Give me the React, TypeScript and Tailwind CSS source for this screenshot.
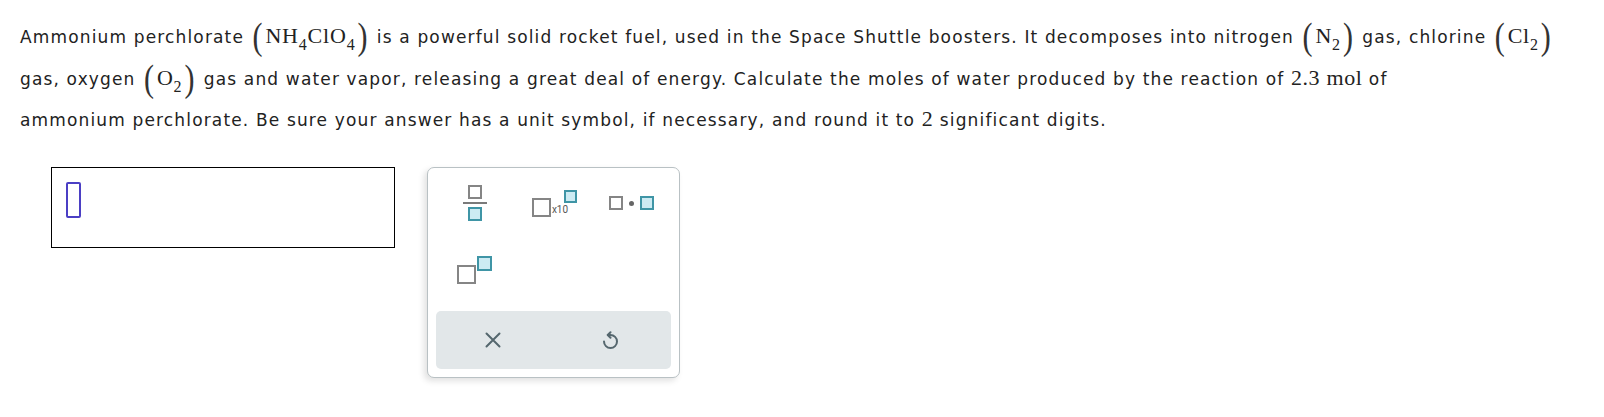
import React from 'react';

const serif = { fontFamily: '"Liberation Serif", "Times New Roman", serif' };

// stretched parenthesis like the math renderer draws
const Paren = ({ ch }: { ch: string }) => (
  <span
    className="inline-block text-[30px] leading-none text-[#333] scale-y-[1.25] font-light"
    style={serif}
  >
    {ch}
  </span>
);

const Sub = ({ children }: { children: React.ReactNode }) => (
  <span className="relative top-[7px] text-[16px] leading-none">{children}</span>
);

const Formula = ({ children }: { children: React.ReactNode }) => (
  <span className="inline-flex items-center align-middle h-[30px] mx-[2px] -mt-[4px] tracking-[0.8px]" style={serif}>
    <Paren ch="(" />
    <span className="text-[22px] leading-none px-[2px] text-[#222]">{children}</span>
    <Paren ch=")" />
  </span>
);

const MathText = ({ children }: { children: React.ReactNode }) => (
  <span className="text-[22px] leading-none text-[#222] tracking-[0.5px]" style={serif}>
    {children}
  </span>
);

const GreySq = ({ className = '' }: { className?: string }) => (
  <span className={`block border-2 border-[#858585] bg-white ${className}`} />
);

const TealSq = ({ className = '' }: { className?: string }) => (
  <span className={`block border-2 border-[#3f95a6] bg-[#cdebf3] ${className}`} />
);

const FractionIcon = () => (
  <span className="flex flex-col items-center">
    <GreySq className="w-[14px] h-[14px]" />
    <span className="block w-[24px] h-[2px] bg-[#7a7a7a] my-[3px]" />
    <TealSq className="w-[14px] h-[14px]" />
  </span>
);

const SciIcon = () => (
  <span className="flex items-end translate-x-[1px]">
    <GreySq className="w-[19px] h-[19px]" />
    <span
      className="text-[10px] leading-none text-[#555] ml-[1px] mb-[2px]"
      style={{ fontFamily: 'Roboto, "Liberation Sans", sans-serif' }}
    >
      x10
    </span>
    <TealSq className="w-[13px] h-[13px] -ml-[4px] mb-[14px]" />
  </span>
);

const DotIcon = () => (
  <span className="flex items-center">
    <GreySq className="w-[14px] h-[14px]" />
    <span className="block w-[5px] h-[5px] rounded-full bg-[#666] mx-[6px]" />
    <TealSq className="w-[14px] h-[14px]" />
  </span>
);

const PowerIcon = () => (
  <span className="flex items-start -translate-x-[1px]">
    <GreySq className="w-[19px] h-[19px] mt-[9px]" />
    <TealSq className="w-[15px] h-[15px] ml-[1px]" />
  </span>
);

const App = () => {
  return (
    <div
      className="w-[1604px] h-[417px] bg-white pl-[20px] pt-[17px] text-[#222]"
      style={{ fontFamily: '"DejaVu Sans", Verdana, sans-serif' }}
    >
      {/* Question */}
      <p className="text-[17px] leading-[41.5px] whitespace-nowrap tracking-[1.15px]">
        Ammonium perchlorate{' '}
        <Formula>
          NH<Sub>4</Sub>ClO<Sub>4</Sub>
        </Formula>{' '}
        is a powerful solid rocket fuel, used in the Space Shuttle boosters. It decomposes into nitrogen{' '}
        <Formula>
          N<Sub>2</Sub>
        </Formula>{' '}
        gas, chlorine{' '}
        <Formula>
          Cl<Sub>2</Sub>
        </Formula>
        <br />
        gas, oxygen{' '}
        <Formula>
          O<Sub>2</Sub>
        </Formula>{' '}
        gas and water vapor, releasing a great deal of energy. Calculate the moles of water produced by the reaction of{' '}
        <MathText>2.3</MathText> <MathText>mol</MathText> of
        <br />
        ammonium perchlorate. Be sure your answer has a unit symbol, if necessary, and round it to <MathText>2</MathText>{' '}
        significant digits.
      </p>
      {/* End Question */}

      {/* Answer row */}
      <div className="flex items-start mt-[25px] ml-[31px] gap-[32px]">
        <div className="w-[344px] h-[81px] border border-black bg-white pt-[14px] pl-[14px]">
          <div className="w-[15px] h-[36px] border-2 border-[#4b3fc4] rounded-[2px]" />
        </div>

        {/* Palette */}
        <div className="w-[253px] h-[211px] border border-[#b9c1c4] rounded-[7px] bg-white shadow-[-3px_3px_6px_rgba(0,0,0,0.12)] px-[8px] pt-[2px] flex flex-col">
          <div className="grid grid-cols-3">
            <button className="h-[67px] flex items-center justify-center">
              <FractionIcon />
            </button>
            <button className="h-[67px] flex items-center justify-center">
              <SciIcon />
            </button>
            <button className="h-[67px] flex items-center justify-center">
              <DotIcon />
            </button>
            <button className="h-[67px] flex items-center justify-center">
              <PowerIcon />
            </button>
          </div>
          <div className="mt-[7px] h-[58px] rounded-[5px] bg-[#e2e7e9] grid grid-cols-2">
            <button className="flex items-center justify-center -translate-x-[2px]">
              <svg width="18" height="18" viewBox="0 0 18 18" fill="none" stroke="#55676e" strokeWidth="2" strokeLinecap="round">
                <path d="M2.5 2.5 L15.5 15.5 M15.5 2.5 L2.5 15.5" />
              </svg>
            </button>
            <button className="flex items-center justify-center translate-x-[-2px] translate-y-[1px]">
              <svg width="20" height="20" viewBox="0 0 20 20" fill="none" stroke="#55676e" strokeWidth="2" strokeLinecap="round" strokeLinejoin="round">
                <path d="M8.5 4 H10.5 A6.5 6.5 0 1 1 4 10.5" />
                <path d="M10.5 1.2 L7.7 4 L10.5 6.8" />
              </svg>
            </button>
          </div>
        </div>
        {/* End Palette */}
      </div>
    </div>
  );
};

export default App;
